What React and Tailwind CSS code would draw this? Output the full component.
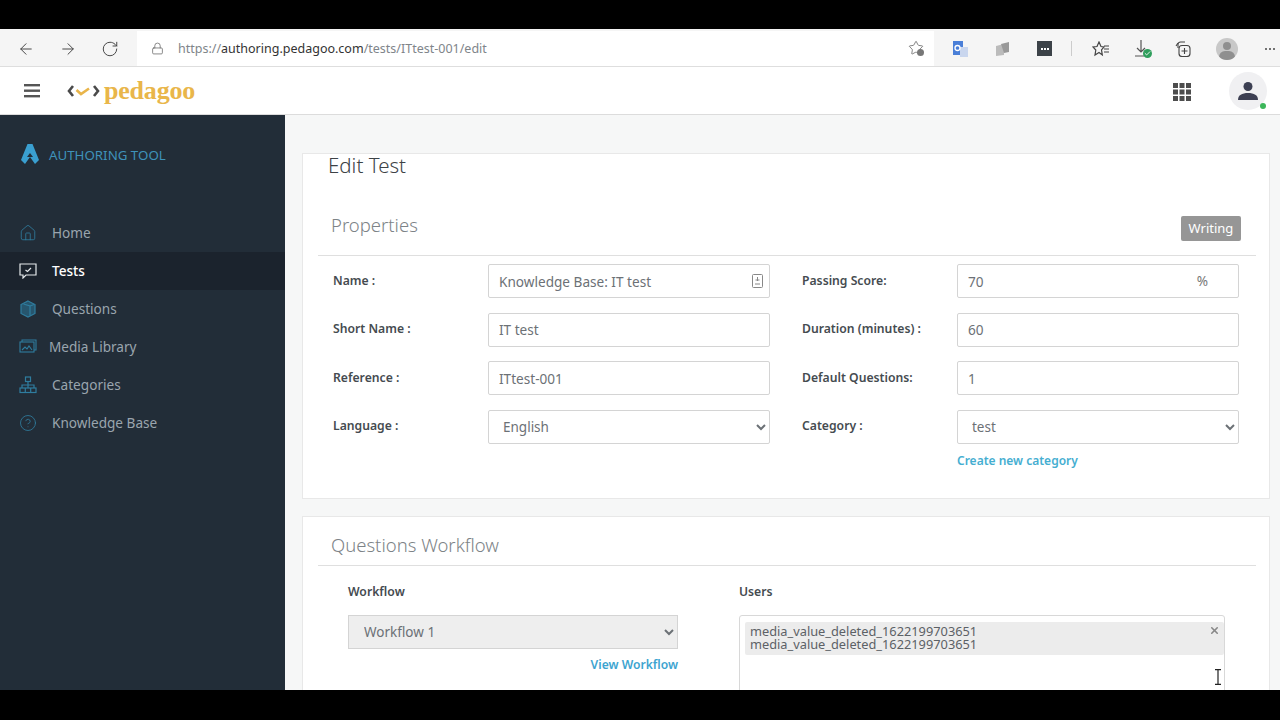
import React from 'react';
import { ArrowLeft, ArrowRight, RotateCw, Lock, Star, Home, CircleHelp, X, Check } from 'lucide-react';

const font = { fontFamily: '"Noto Sans", sans-serif' };

const TestsIcon = () => (
  <svg width="18" height="16" viewBox="0 0 18 16" fill="none" stroke="#e5e9ec" strokeWidth="1.2">
    <path d="M1 1h16v11H7l-3 3v-3H1z" />
    <path d="M6.500 7l2 1.500L12 5" />
  </svg>
);

const QuestionsIcon = () => (
  <svg width="18" height="18" viewBox="0 0 18 18" fill="none" stroke="#2f7d9f" strokeWidth="1.200">
    <path d="M9 1l7 3.500v9L9 17l-7-3.500v-9z" fill="#27566e" />
    <path d="M4.500 4L11 6v9.500M11 6l4-1.500" />
  </svg>
);

const MediaIcon = () => (
  <svg width="18" height="16" viewBox="0 0 18 16" fill="none" stroke="#2f7d9f" strokeWidth="1.100">
    <path d="M3 3V1h14v10h-2" />
    <rect x="1" y="3" width="14" height="10" />
    <path d="M3 11l3-3 2 2 2-3 3 4" />
  </svg>
);

const CategoriesIcon = () => (
  <svg width="18" height="18" viewBox="0 0 18 18" fill="none" stroke="#2f7d9f" strokeWidth="1.200">
    <rect x="6.500" y="1" width="5" height="4.500" />
    <path d="M9 5.500V9M3 12V9h12v3M9 9v3" />
    <rect x="1" y="12" width="16" height="4.500" />
    <path d="M6.300 12v4.500M11.700 12v4.500" />
  </svg>
);

const navigation = [
  { name: 'Home', icon: <Home className="w-[18px] h-[18px] text-[#2f7d9f]" strokeWidth={1.1} /> },
  { name: 'Tests', icon: <TestsIcon />, active: true },
  { name: 'Questions', icon: <QuestionsIcon /> },
  { name: 'Media Library', icon: <MediaIcon />, tight: true },
  { name: 'Categories', icon: <CategoriesIcon /> },
  { name: 'Knowledge Base', icon: <CircleHelp className="w-[18px] h-[18px] text-[#2f7d9f]" strokeWidth={1.1} /> },
];

const Field = ({ label, value, suffix, icon }) => (
  <div className="flex items-center h-[34px]">
    <label className="w-[155px] shrink-0 text-[12.200px] font-semibold text-[#454b50]">{label}</label>
    <div className="relative w-[282px]">
      <input readOnly value={value} className="w-full h-[34px] border border-[#d4d4d4] rounded-[2px] bg-white pl-[10px] text-[13.600px] text-[#6c7176] outline-none" />
      {suffix && <span className="absolute right-[31px] top-[7px] text-[13.600px] text-[#777]">{suffix}</span>}
      {icon && (
        <svg className="absolute right-[6px] top-[10px]" width="13" height="14" viewBox="0 0 13 14" fill="none" stroke="#888">
          <rect x="1.500" y="0.500" width="10" height="13" rx="1" />
          <path d="M6.500 3v4M4.500 6h4M4 10h5" />
        </svg>
      )}
    </div>
  </div>
);

const SelectField = ({ label, value }) => (
  <div className="flex items-center h-[34px]">
    <label className="w-[155px] shrink-0 text-[12.200px] font-semibold text-[#454b50]">{label}</label>
    <select defaultValue={value} className="w-[282px] h-[34px] border border-[#d4d4d4] rounded-[2px] bg-white pl-[10px] text-[13.500px] text-[#6c7176] outline-none">
      <option>{value}</option>
    </select>
  </div>
);

export default function App() {
  return (
    <div style={font} className="h-[720px] w-[1280px] overflow-hidden flex flex-col bg-black">
      {/* Browser chrome */}
      <div className="h-[29px] shrink-0 bg-black" />
      <div className="h-[38px] shrink-0 bg-[#f5f5f5] border-b border-[#dedede] flex items-center pt-[2px] pl-[17px]">
        <ArrowLeft className="w-[18px] h-[18px] text-[#444]" strokeWidth={1.3} />
        <ArrowRight className="w-[18px] h-[18px] text-[#444] ml-[24px]" strokeWidth={1.3} />
        <RotateCw className="w-[18px] h-[18px] text-[#444] ml-[24px]" strokeWidth={1.3} />
        <div className="ml-[18px] w-[797px] h-[35px] bg-white flex items-center pl-[14px] relative">
          <Lock className="w-[13px] h-[13px] text-[#666]" strokeWidth={1.4} />
          <span className="ml-[14px] pt-[2px] text-[12.500px] text-[#80858a]">https://<span className="text-[#333]">authoring.pedagoo.com</span>/tests/ITtest-001/edit</span>
          <span className="absolute left-[771px] top-[9px]"><Star className="w-[16px] h-[16px] text-[#666]" strokeWidth={1.2} /></span>
          <span className="absolute left-[780px] top-[18px] w-[7px] h-[7px] rounded-full bg-[#777]" />
        </div>
        <svg className="ml-[18px]" width="16" height="16" viewBox="0 0 16 16">
          <path d="M1 0h10v14H1z" fill="#4a7fd8" />
          <path d="M8 6h8v10H8z" fill="#c9d6ee" />
          <circle cx="5.500" cy="7" r="2.500" fill="none" stroke="#fff" strokeWidth="1.300" />
        </svg>
        <svg className="ml-[28px]" width="14" height="14" viewBox="0 0 14 14">
          <path d="M0 4l8-2v11l-8 1z" fill="#bbb" />
          <path d="M5 2l8-2v10l-5 1z" fill="#999" />
        </svg>
        <div className="ml-[27px] w-[15px] h-[15px] bg-[#3c4248] flex items-center justify-center gap-[1px]">
          <span className="w-[2px] h-[2px] bg-white" /><span className="w-[2px] h-[2px] bg-white" /><span className="w-[2px] h-[2px] bg-white" />
        </div>
        <div className="ml-[19px] w-px h-[15px] bg-[#ccc]" />
        <svg className="ml-[20px]" width="18" height="16" viewBox="0 0 18 16" fill="none" stroke="#444" strokeWidth="1.200">
          <path d="M7 1l2 4.500 3 .4-2.500 3 .8 5L7 11.500 3 14l.8-5-2.800-3 4-.5z" />
          <path d="M12 5h5M12 8h5M12 11h5" />
        </svg>
        <span className="relative ml-[25px] w-[16px] h-[18px]">
          <svg width="14" height="18" viewBox="0 0 14 18" fill="none" stroke="#555" strokeWidth="1.200">
            <path d="M6 0v12M2 8l4 4 4-4M0 16h9" />
          </svg>
          <span className="absolute left-[8px] top-[9px] w-[9px] h-[9px] rounded-full bg-[#2f9e5c] flex items-center justify-center">
            <Check className="w-[7px] h-[7px] text-white" strokeWidth={3} />
          </span>
        </span>
        <svg className="ml-[24px]" width="16" height="16" viewBox="0 0 16 16" fill="none" stroke="#444" strokeWidth="1.100">
          <path d="M3 7V3.500A2.500 2.500 0 0 1 5.500 1L10 1" />
          <path d="M1 5l2-3" />
          <rect x="4" y="4.500" width="11" height="11" rx="3" />
          <path d="M9.500 7v6M6.500 10h6" />
        </svg>
        <span className="ml-[25px] w-[22px] h-[22px] rounded-full bg-[#c8c8c8] relative overflow-hidden">
          <span className="absolute left-[7px] top-[4px] w-[8px] h-[8px] rounded-full bg-[#8f8f8f]" />
          <span className="absolute left-[3px] top-[13px] w-[16px] h-[12px] rounded-full bg-[#8f8f8f]" />
        </span>
        <span className="ml-[27px] flex gap-[2px]">
          <span className="w-[2px] h-[2px] bg-[#444] rounded-full" /><span className="w-[2px] h-[2px] bg-[#444] rounded-full" /><span className="w-[2px] h-[2px] bg-[#444] rounded-full" />
        </span>
      </div>

      {/* App header */}
      <header className="h-[48px] shrink-0 bg-white border-b border-[#dcdcdc] flex items-center pl-[24px] pr-[13px]">
        <svg width="16" height="14" viewBox="0 0 16 14" fill="#555">
          <rect x="0" y="0" width="16" height="2.400" /><rect x="0" y="5.500" width="16" height="2.400" /><rect x="0" y="11" width="16" height="2.400" />
        </svg>
        <svg className="ml-[27px]" width="33" height="16" viewBox="0 0 33 16" fill="none" strokeWidth="2.600">
          <path d="M6 3L2 8l4 5" stroke="#4a4a4a" />
          <path d="M27 3l4 5-4 5" stroke="#4a4a4a" />
          <path d="M9.500 7l4.500 4 8-5.500" stroke="#e9b54a" />
        </svg>
        <span className="ml-[4px] mt-[1px] text-[26px] leading-none font-bold text-[#e9b64a] tracking-[-0.2px]" style={{ fontFamily: '"Liberation Serif", serif' }}>pedagoo</span>
        <svg className="ml-auto mt-[2px] mr-[1px]" width="18" height="18" viewBox="0 0 18 18" fill="#4d4d4d">
          <rect x="0" y="0" width="5" height="5" /><rect x="6.500" y="0" width="5" height="5" /><rect x="13" y="0" width="5" height="5" />
          <rect x="0" y="6.500" width="5" height="5" /><rect x="6.500" y="6.500" width="5" height="5" /><rect x="13" y="6.500" width="5" height="5" />
          <rect x="0" y="13" width="5" height="5" /><rect x="6.500" y="13" width="5" height="5" /><rect x="13" y="13" width="5" height="5" />
        </svg>
        <div className="relative ml-[37px] w-[38px] h-[38px] rounded-full bg-[#f0f0f2] flex items-center justify-center">
          <svg width="20" height="20" viewBox="0 0 20 20" fill="#3c3f52">
            <circle cx="10" cy="5.500" r="4.500" />
            <path d="M0 19c0-5 4-7 10-7s10 2 10 7z" />
          </svg>
          <span className="absolute right-[1px] bottom-[1px] w-[6px] h-[6px] rounded-full bg-[#3cb65a]" />
        </div>
      </header>

      {/* Body */}
      <div className="flex-1 min-h-0 flex">
        <aside className="w-[285px] shrink-0 bg-[#222d38]">
          <div className="h-[99px] pl-[21px] pt-[29px] flex items-start">
            <svg width="18" height="20" viewBox="0 0 18 20">
              <path d="M6.500 0h5L18 16l-4 4-5-7-5 7-4-4z" fill="#3a9fd0" />
              <path d="M9 9l3 4H6z" fill="#222d38" />
            </svg>
            <span className="ml-[10px] text-[13.300px] mt-[2px] text-[#3f92ba]">AUTHORING TOOL</span>
          </div>
          <nav>
            {navigation.map((item) => (
              <div key={item.name} className={`h-[38px] flex items-center pl-[19px] ${item.active ? 'bg-[#1b232d]' : ''}`}>
                <span className="w-[18px] flex justify-center">{item.icon}</span>
                <span className={`${item.tight ? 'ml-[12px]' : 'ml-[15px]'} text-[13.600px] ${item.active ? 'text-white font-medium' : 'text-[#9aa5ae]'}`}>{item.name}</span>
              </div>
            ))}
          </nav>
        </aside>

        <main className="flex-1 min-w-0 bg-[#f6f7f7] pt-[38px] pl-[17px] pr-[10px] overflow-hidden">
          <section className="bg-white border border-[#e8e8e8] h-[346px]">
            <h1 className="pl-[25px] text-[20.500px] leading-[22px] font-light text-[#3d4246]">Edit Test</h1>
            <div className="mt-[36px] ml-[15px] mr-[13px] h-[44px] border-b border-[#dfdfdf] flex items-start justify-between pl-[13px] pr-[15px]">
              <h2 className="text-[18.500px] leading-[26px] font-light text-[#7d8387]">Properties</h2>
              <span className="mt-[4px] w-[60px] h-[25px] rounded-[2px] bg-[#969696] text-white text-[13px] flex items-center justify-center">Writing</span>
            </div>
            <div className="mt-[8px] pl-[30px] flex gap-[32px]">
              <div className="flex flex-col gap-[14.500px]">
                <Field label="Name :" value="Knowledge Base: IT test" icon />
                <Field label="Short Name :" value="IT test" />
                <Field label="Reference :" value="ITtest-001" />
                <SelectField label="Language :" value="English" />
              </div>
              <div className="flex flex-col gap-[14.500px]">
                <Field label="Passing Score:" value="70" suffix="%" />
                <Field label="Duration (minutes) :" value="60" />
                <Field label="Default Questions:" value="1" />
                <SelectField label="Category :" value="test" />
                <a className="-mt-[6px] pl-[155px] text-[12px] font-semibold text-[#45aed1]">Create new category</a>
              </div>
            </div>
          </section>

          <section className="mt-[17px] bg-white border border-[#e8e8e8] h-[200px]">
            <div className="mt-[15px] ml-[15px] mr-[13px] h-[34px] border-b border-[#dfdfdf] pl-[13px]">
              <h2 className="text-[18.500px] leading-[26px] font-light text-[#7d8387]">Questions Workflow</h2>
            </div>
            <div className="mt-[17px] pl-[45px] flex gap-[61px]">
              <div className="w-[330px]">
                <div className="text-[12.200px] font-semibold text-[#454b50]">Workflow</div>
                <select disabled defaultValue="Workflow 1" className="mt-[14px] w-full h-[34px] border border-[#d4d4d4] bg-[#eeeeee] pl-[11px] text-[13.500px] text-[#6c7176] opacity-100">
                  <option>Workflow 1</option>
                </select>
                <div className="mt-[7px] text-right text-[12.100px] font-semibold text-[#3da4d0]">View Workflow</div>
              </div>
              <div className="w-[486px]">
                <div className="text-[12.200px] font-semibold text-[#454b50]">Users</div>
                <div className="relative mt-[14px] h-[80px] border border-[#d8d8d8] rounded-[3px] bg-white pt-[6px] pl-[5px]">
                  <div className="relative h-[33px] bg-[#ececec] rounded-[2px] pl-[5px] pt-[3px] text-[12.800px] leading-[13px] text-[#5c6166]">
                    <div>media_value_deleted_1622199703651</div>
                    <div>media_value_deleted_1622199703651</div>
                    <X className="absolute right-[4px] top-[3px] w-[11px] h-[11px] text-[#888]" strokeWidth={3.500} />
                  </div>
                  <svg className="absolute left-[474px] top-[53px]" width="8" height="16" viewBox="0 0 8 16" fill="none" stroke="#222" strokeWidth="1.200">
                    <path d="M1 .6h6M4 .6v14.800M1 15.400h6" />
                  </svg>
                </div>
              </div>
            </div>
          </section>
        </main>
      </div>

      <div className="h-[30px] shrink-0 bg-black" />
    </div>
  );
}
